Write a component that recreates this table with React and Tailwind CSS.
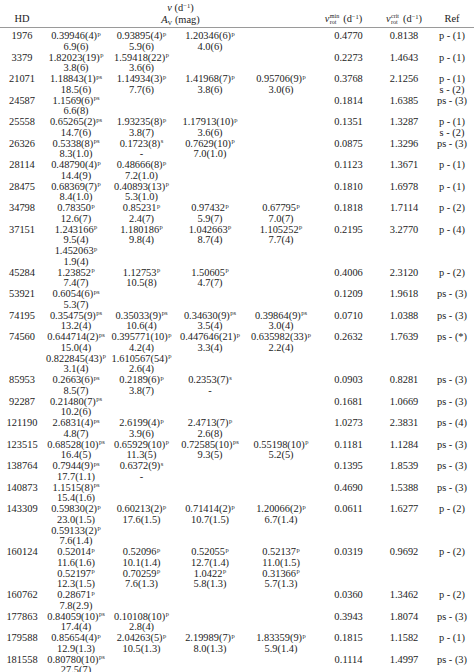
import React from "react";

const rows = [
  { hd: "1976", f: [["0.39946(4)", "p", "6.9(6)"], ["0.93895(4)", "p", "5.9(6)"], ["1.20346(6)", "p", "4.0(6)"]], min: "0.4770", crit: "0.8138", ref: ["p - (1)"] },
  { hd: "3379", f: [["1.82023(19)", "p", "3.8(6)"], ["1.59418(22)", "p", "3.6(6)"]], min: "0.2273", crit: "1.4643", ref: ["p - (1)"] },
  { hd: "21071", f: [["1.18843(1)", "ps", "18.5(6)"], ["1.14934(3)", "p", "7.7(6)"], ["1.41968(7)", "p", "3.8(6)"], ["0.95706(9)", "p", "3.0(6)"]], min: "0.3768", crit: "2.1256", ref: ["p - (1)", "s - (2)"] },
  { hd: "24587", f: [["1.1569(6)", "ps", "6.6(8)"]], min: "0.1814", crit: "1.6385", ref: ["ps - (3)"] },
  { hd: "25558", f: [["0.65265(2)", "ps", "14.7(6)"], ["1.93235(8)", "p", "3.8(7)"], ["1.17913(10)", "p", "3.6(6)"]], min: "0.1351", crit: "1.3287", ref: ["p - (1)", "s - (2)"] },
  { hd: "26326", f: [["0.5338(8)", "ps", "8.3(1.0)"], ["0.1723(8)", "s", "-"], ["0.7629(10)", "p", "7.0(1.0)"]], min: "0.0875", crit: "1.3296", ref: ["ps - (3)"] },
  { hd: "28114", f: [["0.48790(4)", "p", "14.4(9)"], ["0.48666(8)", "p", "7.2(1.0)"]], min: "0.1123", crit: "1.3671", ref: ["p - (1)"] },
  { hd: "28475", f: [["0.68369(7)", "p", "8.4(1.0)"], ["0.40893(13)", "p", "5.3(1.0)"]], min: "0.1810", crit: "1.6978", ref: ["p - (1)"] },
  { hd: "34798", f: [["0.78350", "p", "12.6(7)"], ["0.85231", "p", "2.4(7)"], ["0.97432", "p", "5.9(7)"], ["0.67795", "p", "7.0(7)"]], min: "0.1818", crit: "1.7114", ref: ["p - (2)"] },
  { hd: "37151", f: [["1.243166", "p", "9.5(4)"], ["1.180186", "p", "9.8(4)"], ["1.042663", "p", "8.7(4)"], ["1.105252", "p", "7.7(4)"], ["1.452063", "p", "1.9(4)"]], min: "0.2195", crit: "3.2770", ref: ["p - (4)"] },
  { hd: "45284", f: [["1.23852", "p", "7.4(7)"], ["1.12753", "p", "10.5(8)"], ["1.50605", "p", "4.7(7)"]], min: "0.4006", crit: "2.3120", ref: ["p - (2)"] },
  { hd: "53921", f: [["0.6054(6)", "ps", "5.3(7)"]], min: "0.1209", crit: "1.9618", ref: ["ps - (3)"] },
  { hd: "74195", f: [["0.35475(9)", "ps", "13.2(4)"], ["0.35033(9)", "ps", "10.6(4)"], ["0.34630(9)", "ps", "3.5(4)"], ["0.39864(9)", "ps", "3.0(4)"]], min: "0.0710", crit: "1.0388", ref: ["ps - (3)"] },
  { hd: "74560", f: [["0.644714(2)", "ps", "15.0(4)"], ["0.395771(10)", "p", "4.2(4)"], ["0.447646(21)", "p", "3.3(4)"], ["0.635982(33)", "p", "2.2(4)"], ["0.822845(43)", "p", "3.1(4)"], ["1.610567(54)", "p", "2.6(4)"]], min: "0.2632", crit: "1.7639", ref: ["ps - (*)"] },
  { hd: "85953", f: [["0.2663(6)", "ps", "8.5(7)"], ["0.2189(6)", "p", "3.8(7)"], ["0.2353(7)", "s", "-"]], min: "0.0903", crit: "0.8281", ref: ["ps - (3)"] },
  { hd: "92287", f: [["0.21480(7)", "ps", "10.2(6)"]], min: "0.1681", crit: "1.0669", ref: ["ps - (3)"] },
  { hd: "121190", f: [["2.6831(4)", "ps", "4.8(7)"], ["2.6199(4)", "p", "3.9(6)"], ["2.4713(7)", "p", "2.6(8)"]], min: "1.0273", crit: "2.3831", ref: ["ps - (4)"] },
  { hd: "123515", f: [["0.68528(10)", "ps", "16.4(5)"], ["0.65929(10)", "p", "11.3(5)"], ["0.72585(10)", "ps", "9.3(5)"], ["0.55198(10)", "p", "5.2(5)"]], min: "0.1181", crit: "1.1284", ref: ["ps - (3)"] },
  { hd: "138764", f: [["0.7944(9)", "ps", "17.7(1.1)"], ["0.6372(9)", "s", "-"]], min: "0.1395", crit: "1.8539", ref: ["ps - (3)"] },
  { hd: "140873", f: [["1.1515(8)", "ps", "15.4(1.6)"]], min: "0.4690", crit: "1.5388", ref: ["ps - (3)"] },
  { hd: "143309", f: [["0.59830(2)", "p", "23.0(1.5)"], ["0.60213(2)", "p", "17.6(1.5)"], ["0.71414(2)", "p", "10.7(1.5)"], ["1.20066(2)", "p", "6.7(1.4)"], ["0.59133(2)", "p", "7.6(1.4)"]], min: "0.0611", crit: "1.6277", ref: ["p - (2)"] },
  { hd: "160124", f: [["0.52014", "p", "11.6(1.6)"], ["0.52096", "p", "10.1(1.4)"], ["0.52055", "p", "12.7(1.4)"], ["0.52137", "p", "11.0(1.5)"], ["0.52197", "p", "12.3(1.5)"], ["0.70259", "p", "7.6(1.3)"], ["1.0422", "p", "5.8(1.3)"], ["0.31366", "p", "5.7(1.3)"]], min: "0.0319", crit: "0.9692", ref: ["p - (2)"] },
  { hd: "160762", f: [["0.28671", "p", "7.8(2.9)"]], min: "0.0360", crit: "1.3462", ref: ["p - (2)"] },
  { hd: "177863", f: [["0.84059(10)", "ps", "17.4(4)"], ["0.10108(10)", "p", "2.8(4)"]], min: "0.3943", crit: "1.8074", ref: ["ps - (3)"] },
  { hd: "179588", f: [["0.85654(4)", "p", "12.9(1.3)"], ["2.04263(5)", "p", "10.5(1.3)"], ["2.19989(7)", "p", "8.0(1.3)"], ["1.83359(9)", "p", "5.9(1.4)"]], min: "0.1815", crit: "1.1582", ref: ["p - (1)"] },
  { hd: "181558", f: [["0.80780(10)", "ps", "27.5(7)"]], min: "0.1114", crit: "1.4997", ref: ["ps - (3)"] },
];

const grid = "grid grid-cols-[44px_64px_67px_70px_72px_61px_52px_44px]";

function Freq({ v }) {
  if (!v) return <div />;
  return (
    <div className="flex flex-col items-center">
      <div className="whitespace-nowrap">
        {v[0]}
        <sup className="text-[6.5px] ml-[0.5px]">{v[1]}</sup>
      </div>
      <div className="whitespace-nowrap">{v[2]}</div>
    </div>
  );
}

function Row({ r }) {
  const lines = [];
  for (let i = 0; i < r.f.length; i += 4) lines.push(r.f.slice(i, i + 4));
  return (
    <>
      {lines.map((chunk, li) => (
        <div key={li} className={grid}>
          <div className="text-center">{li === 0 ? r.hd : ""}</div>
          {[0, 1, 2, 3].map((k) => (
            <Freq key={k} v={chunk[k]} />
          ))}
          <div className="text-center pl-[2px]">{li === 0 ? r.min : ""}</div>
          <div className="text-center">{li === 0 ? r.crit : ""}</div>
          <div className="flex flex-col items-center">
            {li === 0 && r.ref.map((t, i) => <div key={i} className="whitespace-nowrap">{t}</div>)}
          </div>
        </div>
      ))}
    </>
  );
}

function NuRot({ top }) {
  return (
    <span className="inline-flex items-center whitespace-nowrap">
      <i>ν</i>
      <span className="inline-flex flex-col text-[6px] leading-[6px] ml-[0.5px] -mt-[1px]">
        <span>{top}</span>
        <span>rot</span>
      </span>
      <span className="ml-[4px]">
        (d<sup className="text-[6.5px]">−1</sup>)
      </span>
    </span>
  );
}

export default function App() {
  return (
    <div className="w-[474px] h-[672px] overflow-hidden bg-white text-[#1c1c1c] text-[10.4px] leading-[10.75px] font-['Liberation_Serif',serif]">
      <div className={`${grid} pt-[2px] h-[28px] border-b border-[#9a9a9a] leading-[12px]`}>
        <div className="text-center self-end pb-[2px]">HD</div>
        <div className="col-span-4 flex flex-col items-center">
          <div>
            <i>ν</i> (d<sup className="text-[6.5px]">−1</sup>)
          </div>
          <div>
            <i>A</i>
            <sub className="text-[6.5px]">V</sub> (mag)
          </div>
        </div>
        <div className="self-end pb-[2px] flex justify-center -ml-[8px]">
          <NuRot top="min" />
        </div>
        <div className="self-end pb-[2px] flex justify-center">
          <NuRot top="crit" />
        </div>
        <div className="text-center self-end pb-[2px]">Ref</div>
      </div>
      <div className="pt-[3px]">
        {rows.map((r) => (
          <Row key={r.hd} r={r} />
        ))}
      </div>
    </div>
  );
}
